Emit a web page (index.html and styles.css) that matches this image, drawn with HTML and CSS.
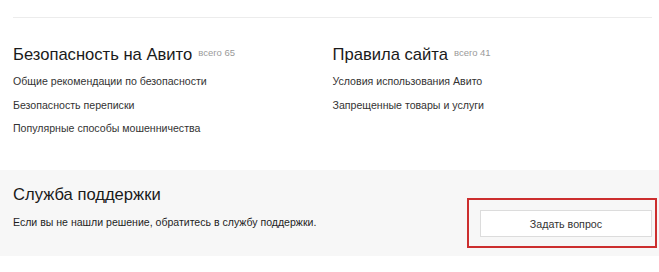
FILE: index.html
```html
<!DOCTYPE html>
<html lang="ru">
<head>
<meta charset="utf-8">
<title>Помощь</title>
<link rel="stylesheet" href="styles.css">
</head>
<body>
<div class="top">
  <div class="divider"></div>
  <div class="columns">
    <section class="col">
      <h2 class="col-title">Безопасность на Авито <span class="count">всего 65</span></h2>
      <ul class="links">
        <li><a href="#">Общие рекомендации по безопасности</a></li>
        <li><a href="#">Безопасность переписки</a></li>
        <li><a href="#">Популярные способы мошенничества</a></li>
      </ul>
    </section>
    <section class="col">
      <h2 class="col-title">Правила сайта <span class="count">всего 41</span></h2>
      <ul class="links">
        <li><a href="#">Условия использования Авито</a></li>
        <li><a href="#">Запрещенные товары и услуги</a></li>
      </ul>
    </section>
  </div>
</div>
<div class="support">
  <div class="support-text">
    <h2 class="support-title">Служба поддержки</h2>
    <p class="support-desc">Если вы не нашли решение, обратитесь в службу поддержки.</p>
  </div>
  <div class="highlight">
    <button class="ask-btn" type="button">Задать вопрос</button>
  </div>
</div>
</body>
</html>
```

FILE: styles.css
```css
* { box-sizing: border-box; }
html, body {
  margin: 0;
  padding: 0;
  background: #fff;
  font-family: "Liberation Sans", Arial, sans-serif;
  color: #1a1a1a;
}
.top {
  padding: 17px 7px 0 13px;
  height: 170px;
}
.divider {
  height: 1px;
  background: #ececec;
}
.columns {
  display: flex;
  padding-top: 27px;
}
.col {
  width: 320px;
}
.col-title {
  margin: 0;
  font-weight: normal;
  font-size: 16.6px;
  line-height: 20px;
  color: #1a1a1a;
  display: flex;
  align-items: flex-start;
}
.count {
  font-size: 9.5px;
  line-height: 12px;
  color: #9a9a9a;
  margin-left: 6px;
  margin-top: 1.5px;
}
.links {
  list-style: none;
  margin: 9px 0 0;
  padding: 0;
  display: flex;
  flex-direction: column;
  gap: 9.5px;
}
.links li {
  font-size: 10.6px;
  line-height: 14px;
}
.links a {
  color: #333;
  text-decoration: none;
}
.support {
  background: #f7f7f7;
  height: 86px;
  display: flex;
  justify-content: space-between;
  align-items: flex-start;
  padding: 0 2px 0 13px;
}
.support-text {
  padding-top: 14.5px;
}
.support-title {
  margin: 0;
  font-weight: normal;
  font-size: 16.6px;
  line-height: 20px;
  color: #1a1a1a;
}
.support-desc {
  margin: 10px 0 0;
  font-size: 10.55px;
  line-height: 14px;
  color: #1e1e1e;
}
.highlight {
  margin-top: 28px;
  border: 2px solid #cc2e2e;
  padding: 10px 3px 9px 11px;
}
.ask-btn {
  display: block;
  width: 172px;
  height: 27px;
  background: #fff;
  border: 1px solid #dcdcdc;
  border-radius: 0;
  font-family: "Liberation Sans", Arial, sans-serif;
  font-size: 10.7px;
  color: #333;
  padding: 0;
}
```
